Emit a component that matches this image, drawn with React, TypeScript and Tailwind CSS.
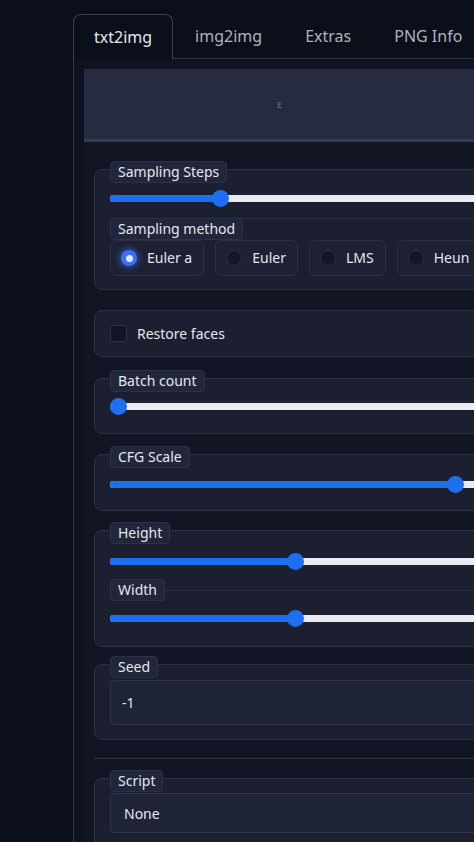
import React from "react";

function Label({ text, className = "" }: { text: string; className?: string }) {
  return (
    <div className={"flex " + className}>
      <span className="inline-flex items-center h-[22px] px-[7px] rounded-[4px] border border-[#2c3145] bg-[#22263a] text-[14px] leading-none text-[#e5e7eb]">
        {text}
      </span>
    </div>
  );
}

function Slider({ fill }: { fill: number }) {
  return (
    <div className="relative h-[16px] flex items-center">
      <div className="relative w-full h-[7px] rounded-full bg-[#e8ecf2]">
        <div className="absolute left-0 top-0 h-[7px] rounded-full bg-[#1e6ff0]" style={{ width: fill + 8 }} />
        <div
          className="absolute top-[-5px] w-[17px] h-[17px] rounded-full bg-[#1e6ff0]"
          style={{ left: fill }}
        />
      </div>
    </div>
  );
}

function Radio({ text, selected = false }: { text: string; selected?: boolean }) {
  return (
    <div className="flex items-center h-[36px] shrink-0 pl-[10px] pr-[10px] gap-[10px] rounded-md bg-[#1d2133] border border-[#2a2f42]">
      {selected ? (
        <span className="w-[16px] h-[16px] rounded-full bg-[#3b6ff5] flex items-center justify-center shadow-[0_0_6px_2px_rgba(59,111,245,0.55)]">
          <span className="w-[7px] h-[7px] rounded-full bg-[#dbeafe]" />
        </span>
      ) : (
        <span className="w-[16px] h-[16px] rounded-full bg-[#131726] border border-[#2a2f42]" />
      )}
      <span className="text-[14px] text-[#e5e7eb] leading-none pr-[1px]">{text}</span>
    </div>
  );
}

function Block({ children, className = "" }: { children: React.ReactNode; className?: string }) {
  return (
    <div className={"rounded-lg border border-[#2b3043] bg-[#1b1f2f] px-[15px] " + className}>{children}</div>
  );
}

export default function App() {
  return (
    <div className="w-[474px] h-[842px] overflow-hidden bg-[#0b0f19] font-['Noto_Sans',sans-serif]">
      <div className="w-[700px] pt-[14px] pl-[73px]">
        {/* Tabs */}
        <div className="flex h-[44px] items-stretch">
          <div className="relative z-10 -mb-px flex items-center px-[20px] h-[45px] rounded-t-lg border border-b-0 border-[#3a4052] bg-[#0b0f19] text-[16px] text-[#e5e7eb]">
            txt2img
          </div>
          <div className="flex items-center px-[22px] text-[16px] text-[#aeb3be]">img2img</div>
          <div className="flex items-center px-[21px] text-[16px] text-[#aeb3be]">Extras</div>
          <div className="flex items-center px-[22px] text-[16px] text-[#aeb3be]">PNG Info</div>
        </div>

        {/* Panel */}
        <div className="border-l border-t border-[#2f3545] bg-[#0f1321] pl-[10px] pt-[10px] pb-[40px]">
          {/* Prompt area */}
          <div className="h-[73px] bg-[#272b41] border-b-[3px] border-[#353a51] flex items-center pl-[193px]">
            <span className="text-[10px] text-[#6d7285] leading-none">ε</span>
          </div>

          {/* Settings column */}
          <div className="pl-[10px] flex flex-col bg-[#111524]">
            {/* Sampling */}
            <Block className="mt-[27px] pb-[13px]">
              <Label text="Sampling Steps" className="-mt-[9px]" />
              <div className="mt-[7px]">
                <Slider fill={102} />
              </div>
              <div className="mt-[12px] border-t border-[#2a2f42] -mr-[15px]">
                <Label text="Sampling method" className="-mt-px" />
                <div className="flex gap-[11px] mt-0">
                  <Radio text="Euler a" selected />
                  <Radio text="Euler" />
                  <Radio text="LMS" />
                  <Radio text="Heun" />
                </div>
              </div>
            </Block>

            {/* Restore faces */}
            <Block className="mt-[20px] h-[47px] flex items-center gap-[10px]">
              <span className="w-[17px] h-[17px] rounded-[3px] bg-[#121624] border border-[#2e3347]" />
              <span className="text-[14px] text-[#e5e7eb] leading-none">Restore faces</span>
            </Block>

            {/* Batch count */}
            <Block className="mt-[21px] pb-[19px]">
              <Label text="Batch count" className="-mt-[9px]" />
              <div className="mt-[6px]">
                <Slider fill={0} />
              </div>
            </Block>

            {/* CFG Scale */}
            <Block className="mt-[20px] pb-[18px]">
              <Label text="CFG Scale" className="-mt-[9px]" />
              <div className="mt-[8px]">
                <Slider fill={337} />
              </div>
            </Block>

            {/* Height / Width */}
            <Block className="mt-[19px] pb-[20px]">
              <Label text="Height" className="-mt-[9px]" />
              <div className="mt-[9px]">
                <Slider fill={177} />
              </div>
              <div className="mt-[10px]">
                <div className="flex items-center">
                  <Label text="Width" />
                  <div className="flex-1 h-px bg-[#2a2f42]" />
                </div>
              </div>
              <div className="mt-[9px]">
                <Slider fill={177} />
              </div>
            </Block>

            {/* Seed */}
            <Block className="mt-[17px] pb-[14px]">
              <Label text="Seed" className="-mt-[9px]" />
              <div className="mt-[2px] h-[45px] flex items-center px-[11px] rounded-[4px] bg-[#1f2336] border border-[#2f3449] text-[14px] text-[#e5e7eb]">
                -1
              </div>
            </Block>

            {/* Separator */}
            <div className="mt-[18px] h-px bg-[#2e3345]" />

            {/* Script */}
            <Block className="mt-[19px] pb-[14px]">
              <Label text="Script" className="-mt-[9px]" />
              <div className="mt-[1px] h-[40px] flex items-center px-[13px] rounded-[4px] bg-[#1f2336] border border-[#2f3449] text-[14px] text-[#e5e7eb]">
                None
              </div>
            </Block>
          </div>
        </div>
      </div>
    </div>
  );
}
